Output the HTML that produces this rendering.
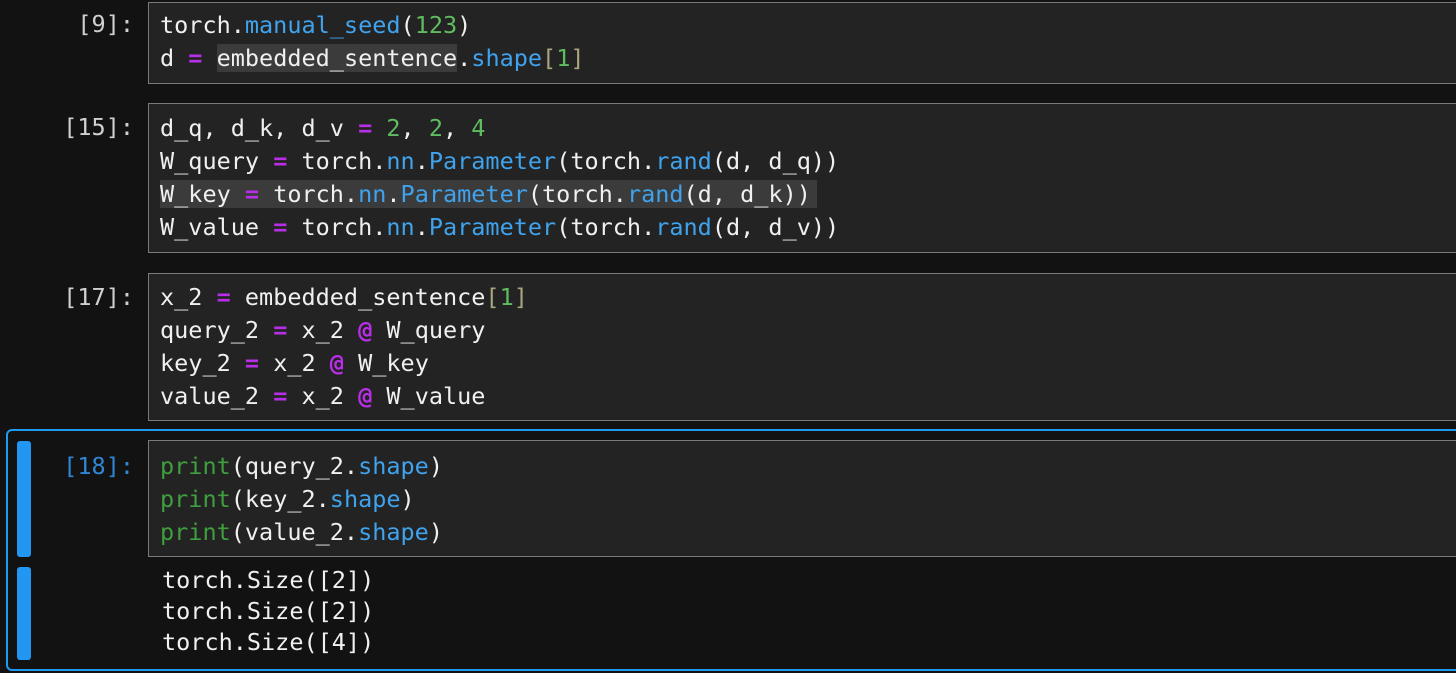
<!DOCTYPE html>
<html><head><style>
body{margin:0;width:1456px;height:673px;background:#121212;overflow:hidden;position:relative;font-family:"DejaVu Sans Mono","Liberation Mono",monospace;}
.cell{position:absolute;left:148px;width:1320px;background:#232323;border:1px solid #7a7a7a;box-sizing:border-box;}
.ln{position:absolute;left:11px;height:33px;line-height:33px;font-size:23.5px;color:#f0f0f0;white-space:pre;}
.p{position:absolute;right:1322px;font-size:23.5px;line-height:33px;color:#d0d0d0;white-space:pre;}
.k{color:#b92ee8;font-weight:bold}.f{color:#3fa3ee}.n{color:#5fbd60}.b{color:#a8a67c}.g{color:#3f9f3f}
.hl{background:#3b3b3b}
.bar{position:absolute;left:17px;width:14px;background:#2196f3;border-radius:3px;}
.out{position:absolute;left:162px;font-size:23.5px;line-height:31px;color:#f0f0f0;white-space:pre;}
</style></head><body>
<div class="p" style="top:8px">[9]:</div>
<div class="cell" style="top:2px;height:82px">
<div class="ln" style="top:6px">torch.<span class="f">manual_seed</span>(<span class="n">123</span>)</div>
<div class="ln" style="top:39px">d <span class="k">=</span> <span class="hl">embedded_sentence</span>.<span class="f">shape</span><span class="b">[</span><span class="n">1</span><span class="b">]</span></div>
</div>
<div class="p" style="top:111px">[15]:</div>
<div class="cell" style="top:103px;height:150px">
<div class="ln" style="top:8px">d_q, d_k, d_v <span class="k">=</span> <span class="n">2</span>, <span class="n">2</span>, <span class="n">4</span></div>
<div class="ln" style="top:41px">W_query <span class="k">=</span> torch.<span class="f">nn</span>.<span class="f">Parameter</span>(torch.<span class="f">rand</span>(d, d_q))</div>
<div class="ln" style="top:74px;"><span class="hl" style="display:inline-block;line-height:28px;padding-right:6px">W_key <span class="k">=</span> torch.<span class="f">nn</span>.<span class="f">Parameter</span>(torch.<span class="f">rand</span>(d, d_k))</span></div>
<div class="ln" style="top:107px">W_value <span class="k">=</span> torch.<span class="f">nn</span>.<span class="f">Parameter</span>(torch.<span class="f">rand</span>(d, d_v))</div>
</div>
<div class="p" style="top:281px">[17]:</div>
<div class="cell" style="top:273px;height:148px">
<div class="ln" style="top:7px">x_2 <span class="k">=</span> embedded_sentence<span class="b">[</span><span class="n">1</span><span class="b">]</span></div>
<div class="ln" style="top:40px">query_2 <span class="k">=</span> x_2 <span class="k">@</span> W_query</div>
<div class="ln" style="top:73px">key_2 <span class="k">=</span> x_2 <span class="k">@</span> W_key</div>
<div class="ln" style="top:106px">value_2 <span class="k">=</span> x_2 <span class="k">@</span> W_value</div>
</div>
<div style="position:absolute;left:6px;top:429px;width:1470px;height:242px;border:2px solid #1e9bf0;border-radius:6px;box-sizing:border-box;"></div>
<div class="bar" style="top:441px;height:116px"></div>
<div class="bar" style="top:567px;height:93px"></div>
<div class="p" style="top:450px;color:#2f86d6">[18]:</div>
<div class="cell" style="top:440px;height:117px">
<div class="ln" style="top:9px"><span class="g">print</span>(query_2.<span class="f">shape</span>)</div>
<div class="ln" style="top:42px"><span class="g">print</span>(key_2.<span class="f">shape</span>)</div>
<div class="ln" style="top:75px"><span class="g">print</span>(value_2.<span class="f">shape</span>)</div>
</div>
<div class="out" style="top:565px">torch.Size([2])
torch.Size([2])
torch.Size([4])</div>
</body></html>
